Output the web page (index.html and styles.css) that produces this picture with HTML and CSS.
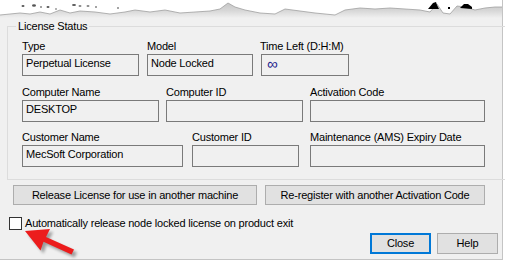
FILE: index.html
```html
<!DOCTYPE html>
<html>
<head>
<meta charset="utf-8">
<link rel="stylesheet" href="styles.css">
</head>
<body>
<div class="dialog">
  <svg class="torn" width="502" height="18" viewBox="0 0 502 18">
    <defs>
      <linearGradient id="tg" x1="0" y1="4" x2="0" y2="18" gradientUnits="userSpaceOnUse">
        <stop offset="0" stop-color="#c8c8c8"/>
        <stop offset="0.5" stop-color="#d8d8d8"/>
        <stop offset="1" stop-color="#f0f0f0"/>
      </linearGradient>
    </defs>
    <rect x="0" y="0" width="502" height="18" fill="#ffffff"/>
    <polygon fill="url(#tg)" points="0,15 10,14 20,13 30,14 40,12 50,14 60,10 70,13 80,11 95,12 110,14 125,12 135,10 150,12 165,10 180,13 195,12 210,11 220,9 228,3 235,7 245,10 260,13 275,14 285,9 300,11 315,13 335,15 345,10 360,8 375,9 390,8 405,9 420,10 430,12 437,4 443,13 450,14 457,6 465,7 475,10 485,8 495,7 502,7 502,18 0,18"/>
    <polyline fill="none" stroke="#a0a0a0" stroke-width="0.8" points="0,15 10,14 20,13 30,14 40,12 50,14 60,10 70,13 80,11 95,12 110,14 125,12 135,10 150,12 165,10 180,13 195,12 210,11 220,9 228,3 235,7 245,10 260,13 275,14 285,9 300,11 315,13 335,15 345,10 360,8 375,9 390,8 405,9 420,10 430,12 437,4 443,13 450,14 457,6 465,7 475,10 485,8 495,7 502,7"/>
    <g fill="#555555">
      <ellipse cx="23" cy="6" rx="1.5" ry="1"/>
      <ellipse cx="34" cy="5.5" rx="2" ry="1.2"/>
      <ellipse cx="41" cy="7" rx="1" ry="0.8"/>
      <ellipse cx="48" cy="7" rx="1.5" ry="1"/>
      <ellipse cx="56" cy="9" rx="0.8" ry="0.8"/>
      <ellipse cx="74" cy="5" rx="2" ry="1"/>
      <ellipse cx="80" cy="6" rx="1.5" ry="0.8"/>
      <ellipse cx="88" cy="6" rx="1.5" ry="0.8"/>
      <ellipse cx="96" cy="7" rx="1" ry="0.8"/>
      <ellipse cx="118" cy="8" rx="1" ry="0.8"/>
    </g>
    <g fill="#000000">
      <polygon points="428,9 433,3 436,2 437,5 439,9"/>
      <polygon points="460,8 464,4 468,4 472,7 472,9"/>
      <rect x="448" y="7" width="2" height="2"/>
    </g>
  </svg>

  <div class="group">
    <div class="group-title">License Status</div>
    <div class="row r1">
      <div class="field w-type"><div class="lbl">Type</div><div class="box">Perpetual License</div></div>
      <div class="field w-model"><div class="lbl">Model</div><div class="box">Node Locked</div></div>
      <div class="field w-time"><div class="lbl">Time Left (D:H:M)</div><div class="box"><span class="inf">∞</span></div></div>
    </div>
    <div class="row r2">
      <div class="field w-cname"><div class="lbl">Computer Name</div><div class="box">DESKTOP</div></div>
      <div class="field w-cid"><div class="lbl">Computer ID</div><div class="box"></div></div>
      <div class="field w-act"><div class="lbl">Activation Code</div><div class="box"></div></div>
    </div>
    <div class="row r3">
      <div class="field w-custname"><div class="lbl">Customer Name</div><div class="box">MecSoft Corporation</div></div>
      <div class="field w-custid"><div class="lbl">Customer ID</div><div class="box"></div></div>
      <div class="field w-ams"><div class="lbl">Maintenance (AMS) Expiry Date</div><div class="box"></div></div>
    </div>
  </div>

  <div class="actions">
    <button class="btn b-release">Release License for use in another machine</button>
    <button class="btn b-reg">Re-register with another Activation Code</button>
  </div>

  <label class="check"><span class="cb"></span><span class="check-text">Automatically release node locked license on product exit</span></label>

  <div class="footer">
    <button class="btn b-small b-close">Close</button>
    <button class="btn b-small">Help</button>
  </div>

  <svg class="arrow" width="64" height="40" viewBox="18 222 64 40">
    <defs>
      <filter id="sh" x="-30%" y="-30%" width="160%" height="160%">
        <feGaussianBlur stdDeviation="1.5"/>
      </filter>
    </defs>
    <polygon transform="translate(3,3)" filter="url(#sh)" fill="#000" opacity="0.35" points="25,231 50,229 46,236.9 74,249.5 71.5,254.5 43.5,241.8 40.5,250.5"/>
    <polygon fill="#ec1c1c" points="25,231 50,229 46,236.9 74,249.5 71.5,254.5 43.5,241.8 40.5,250.5"/>
  </svg>
</div>
</body>
</html>
```

FILE: styles.css
```css
html, body {
  margin: 0;
  padding: 0;
  background: #ffffff;
}

body {
  width: 505px;
  height: 261px;
  overflow: hidden;
  font-family: "Liberation Sans", Arial, sans-serif;
  font-size: 11px;
  letter-spacing: -0.2px;
  color: #000;
}

.dialog {
  position: relative;
  width: 502px;
  height: 259px;
  background: #f0f0f0;
  border-right: 1px solid #c4c4c4;
  border-bottom: 1px solid #c4c4c4;
}

.torn {
  display: block;
}

.group {
  margin: 8px 0 0 7px;
  width: 489px;
  border: 1px solid #dcdcdc;
  padding: 0 0 12px 14px;
  box-sizing: content-box;
}

.group-title {
  width: fit-content;
  margin: -7px 0 0 -6px;
  padding: 0 2px;
  line-height: 13px;
  background: #f0f0f0;
}

.row {
  display: flex;
}

.r1 { margin-top: 7px; }
.r2 { margin-top: 10px; }
.r3 { margin-top: 9px; }

.field {
  display: flex;
  flex-direction: column;
}

.lbl {
  line-height: 13px;
  height: 13px;
  margin-bottom: 1px;
  white-space: nowrap;
}

.box {
  box-sizing: border-box;
  height: 22px;
  border: 1px solid #7a7a7a;
  background: #f0f0f0;
  padding: 2px 3px 0;
  line-height: 13px;
  white-space: nowrap;
}

.inf {
  font-size: 15px;
  color: #22228c;
  padding-left: 2px;
  letter-spacing: 0;
}

.w-type { width: 117px; }
.w-model { width: 106px; margin-left: 8px; }
.w-time { width: 88px; margin-left: 8px; }
.w-time .lbl { margin-left: -1px; }

.w-cname { width: 137px; }
.w-cid { width: 137px; margin-left: 7px; }
.w-act { width: 175px; margin-left: 7px; }

.w-custname { width: 161px; }
.w-custid { width: 107px; margin-left: 9px; }
.w-ams { width: 175px; margin-left: 11px; }

.actions {
  display: flex;
  gap: 8px;
  margin: 5px 0 0 13px;
}

.btn {
  box-sizing: border-box;
  height: 20px;
  margin: 0;
  padding: 0;
  border: 1px solid #adadad;
  background: #e1e1e1;
  font-family: inherit;
  font-size: 11px;
  letter-spacing: -0.2px;
  color: #000;
  line-height: 13px;
}

.b-release { width: 244px; }
.b-reg { width: 220px; }

.check {
  display: flex;
  align-items: center;
  margin: 12px 0 0 9px;
  height: 13px;
  line-height: 13px;
}

.cb {
  box-sizing: border-box;
  width: 13px;
  height: 13px;
  border: 1px solid #333333;
  background: #ffffff;
  margin-right: 3px;
}

.footer {
  display: flex;
  justify-content: flex-end;
  gap: 6px;
  margin-top: 3px;
  padding-right: 4px;
}

.b-small {
  width: 61px;
  height: 21px;
}

.b-close {
  border: 2px solid #0078d7;
}

.arrow {
  position: absolute;
  left: 18px;
  top: 222px;
}
```
